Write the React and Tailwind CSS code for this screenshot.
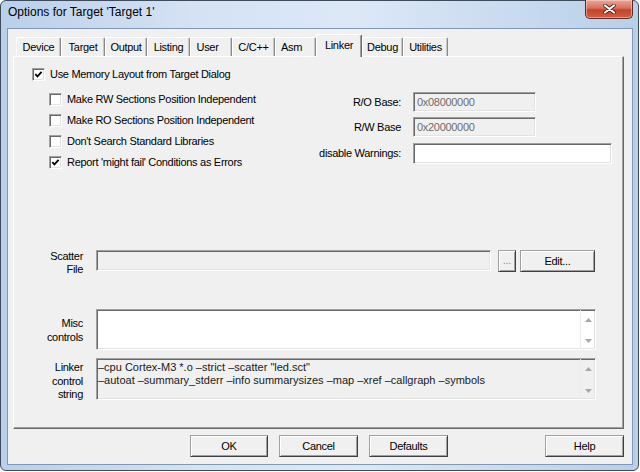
import React from "react";

const sunken =
	"border border-t-[#a0a0a0] border-l-[#a0a0a0] border-b-white border-r-white shadow-[inset_1px_1px_0_#696969,inset_-1px_-1px_0_#e3e3e3]";
const raised =
	"border border-t-[#a0a0a0] border-l-[#a0a0a0] border-b-[#404040] border-r-[#404040] shadow-[inset_1px_1px_0_#ffffff,inset_-1px_-1px_0_#a0a0a0]";

const tabs = [
	{ name: "Device", w: "w-[45px]", pad: "" },
	{ name: "Target", w: "w-[44px]", pad: "" },
	{ name: "Output", w: "w-[42px]", pad: "" },
	{ name: "Listing", w: "w-[43px]", pad: "" },
	{ name: "User", w: "w-[42px]", pad: "pr-[7px]" },
	{ name: "C/C++", w: "w-[43px]", pad: "" },
	{ name: "Asm", w: "w-[41px]", pad: "pr-[8px]" },
	{ name: "Linker", w: "w-[46px]", pad: "", active: true },
	{ name: "Debug", w: "w-[41px]", pad: "" },
	{ name: "Utilities", w: "w-[45px]", pad: "" },
];

const Tab = ({ tab }) => {
	if (tab.active) {
		return (
			<div
				className={`relative z-10 mb-[-1px] flex h-[23px] ${tab.w} items-center justify-center rounded-t-[2px] border-l border-t border-r border-l-white border-t-white border-r-[#696969] bg-[#f0f0f0] pb-[2px] shadow-[inset_-1px_0_0_#a0a0a0]`}
			>
				{tab.name}
			</div>
		);
	}
	return (
		<div
			className={`flex h-[19px] ${tab.w} items-center justify-center rounded-t-[2px] border-l border-t border-r border-l-white border-t-white border-r-[#8a8a8a] ${tab.pad} shadow-[inset_-1px_0_0_#c8c8c8]`}
		>
			{tab.name}
		</div>
	);
};

const Check = ({ checked, label }) => (
	<div className="flex h-[21px] items-center">
		<div className={`flex h-[13px] w-[13px] items-center justify-center bg-white ${sunken}`}>
			{checked && (
				<svg width="9" height="9" viewBox="0 0 9 9">
					<path d="M1.3 4.2 L3.4 6.4 L7.6 1.8" fill="none" stroke="#000" strokeWidth="1.8" />
				</svg>
			)}
		</div>
		<span className="ml-[5px]">{label}</span>
	</div>
);

const Btn = ({ children, className }) => (
	<div className={`flex items-center justify-center bg-[#f0f0f0] ${raised} ${className}`}>{children}</div>
);

const Arrows = () => (
	<div className="flex w-[15px] flex-col items-center justify-between border-l border-l-[#ececec] pt-[8px] pb-[6px]">
		<svg width="7" height="4" viewBox="0 0 7 4">
			<polygon points="0,4 7,4 3.5,0" fill="#a6a6a6" />
		</svg>
		<svg width="7" height="4" viewBox="0 0 7 4">
			<polygon points="0,0 7,0 3.5,4" fill="#a6a6a6" />
		</svg>
	</div>
);

export default function App() {
	return (
		<div className="h-[472px] w-[640px] bg-white font-['Liberation_Sans',Arial,sans-serif] text-[11px] tracking-[-0.3px] text-black">
			<div className="flex h-[471px] w-[639px] flex-col rounded-[6px] border border-[#3e4b5b] bg-[linear-gradient(90deg,#b9d0ea_0%,#d4e2f3_30%,#dce8f6_55%,#c9dbef_80%,#b8cfe9_100%)]">
				{/* title bar */}
				<div className="flex h-[27px] items-start">
					<div className="pl-[7px] pt-[3px] text-[12px] leading-[16px] tracking-normal text-black">
						Options for Target 'Target 1'
					</div>
					<div className="mt-[-1px] ml-auto mr-[5px] flex h-[19px] w-[48px] items-center justify-center rounded-b-[5px] border border-t-0 border-[#5e2a20] bg-[linear-gradient(180deg,#e9a89c_0%,#d8705c_45%,#c2432c_55%,#d25f3e_100%)] shadow-[inset_0_0_0_1px_rgba(255,220,210,0.5)]">
						<svg width="13" height="10" viewBox="0 0 13 10">
							<path d="M2 1.5 L11 8.5 M11 1.5 L2 8.5" stroke="#4a1a12" strokeWidth="3.6" strokeLinecap="round" />
							<path d="M2 1.5 L11 8.5 M11 1.5 L2 8.5" stroke="#ffffff" strokeWidth="2.2" strokeLinecap="round" />
						</svg>
					</div>
				</div>

				{/* client area */}
				<div className="ml-[6px] mr-[5px] flex h-[437px] flex-col border border-[#8198b4] bg-[#f0f0f0]">
					{/* tabs */}
					<div className="mt-[5px] flex h-[22px] items-end pl-[8px]">
						{tabs.map((t) => (
							<Tab key={t.name} tab={t} />
						))}
					</div>

					{/* panel */}
					<div className="ml-[5px] flex h-[373px] w-[611px] flex-col border border-t-white border-l-white border-r-[#696969] border-b-[#696969] shadow-[inset_-1px_-1px_0_#a0a0a0]">
						<div className="mt-[7px] pl-[18px]">
							<Check checked label="Use Memory Layout from Target Dialog" />
						</div>

						<div className="mt-[4px] flex">
							<div className="flex w-[299px] flex-col pl-[35px]">
								<Check label="Make RW Sections Position Independent" />
								<Check label="Make RO Sections Position Independent" />
								<Check label="Don't Search Standard Libraries" />
								<Check checked label="Report 'might fail' Conditions as Errors" />
							</div>
							<div className="mt-[3px] flex flex-col">
								<div className="flex h-[20px] items-center">
									<div className="w-[100px] pr-[12px] text-right">R/O Base:</div>
									<div className={`flex h-[20px] w-[123px] items-center pl-[3px] text-[#6d6d6d] ${sunken} bg-[#f0f0f0]`}>
										0x08000000
									</div>
								</div>
								<div className="mt-[5px] flex h-[20px] items-center">
									<div className="w-[100px] pr-[12px] text-right">R/W Base</div>
									<div className={`flex h-[20px] w-[123px] items-center pl-[3px] text-[#6d6d6d] ${sunken} bg-[#f0f0f0]`}>
										0x20000000
									</div>
								</div>
								<div className="mt-[6px] flex h-[21px] items-center">
									<div className="w-[100px] pr-[12px] text-right">disable Warnings:</div>
									<div className={`h-[21px] w-[199px] bg-white ${sunken}`} />
								</div>
							</div>
						</div>

						{/* scatter file */}
						<div className="mt-[77px] flex h-[22px] items-start">
							<div className="w-[69px] text-right leading-[13px]">
								Scatter
								<br />
								File
							</div>
							<div className={`ml-[13px] h-[21px] w-[395px] bg-[#f0f0f0] ${sunken}`} />
							<Btn className="ml-[7px] h-[22px] w-[18px] pb-[2px] text-[#8a8a8a]">...</Btn>
							<Btn className="ml-[4px] h-[22px] w-[75px]">Edit...</Btn>
						</div>

						{/* misc controls */}
						<div className="mt-[37px] flex h-[41px] items-center">
							<div className="w-[69px] text-right leading-[14px]">
								Misc
								<br />
								controls
							</div>
							<div className={`ml-[13px] flex h-[41px] w-[500px] bg-white ${sunken}`}>
								<div className="flex-1" />
								<Arrows />
							</div>
						</div>

						{/* linker control string */}
						<div className="mt-[8px] flex h-[42px] items-start">
							<div className="mt-[3px] w-[69px] text-right leading-[13.5px]">
								Linker
								<br />
								control
								<br />
								string
							</div>
							<div className={`ml-[13px] flex h-[42px] w-[500px] bg-[#f0f0f0] ${sunken}`}>
								<div className="flex-1 pt-[2px] pl-[1px] leading-[13px] tracking-[0px] text-[#1a1a1a]">
									<div>–cpu Cortex-M3 *.o –strict –scatter "led.sct"</div>
									<div>–autoat –summary_stderr –info summarysizes –map –xref –callgraph –symbols</div>
								</div>
								<Arrows />
							</div>
						</div>
					</div>

					{/* dialog buttons */}
					<div className="mt-[6px] flex h-[22px] pl-[182px]">
						<Btn className="h-[22px] w-[78px]">OK</Btn>
						<Btn className="ml-[11px] h-[22px] w-[79px]">Cancel</Btn>
						<Btn className="ml-[11px] h-[22px] w-[79px]">Defaults</Btn>
						<Btn className="ml-[97px] h-[22px] w-[79px]">Help</Btn>
					</div>
				</div>
			</div>
		</div>
	);
}
